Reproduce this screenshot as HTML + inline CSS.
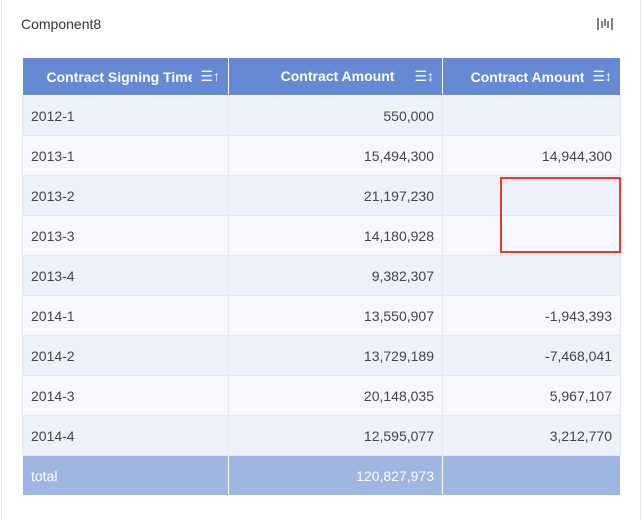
<!DOCTYPE html><html><head><style>
body{margin:0;width:644px;height:514px;background:#fff;font-family:"Liberation Sans",sans-serif;position:relative;overflow:hidden}
.card{position:absolute;left:1px;top:0;width:638px;height:520px;border-left:1px solid #e6e8ee;border-right:1px solid #e6e8ee}
.title{position:absolute;left:21px;top:16px;font-size:14px;color:#333}
table{position:absolute;left:22px;top:57px;border-collapse:collapse;font-size:14px;color:#444}
td,th{border:1px solid #e4e8f0;padding:0 8px;height:40px;box-sizing:border-box}
th{background:#6589d3;color:#fff;font-weight:bold;height:38px;border-color:#fff;text-align:right;white-space:nowrap;overflow:hidden}
tr.a td{background:#edf2fa}tr.b td{background:#f6f8fc}
tr.t td{background:#9fb5e2;color:#fff;border-color:#fff}
.r{text-align:right}
.ic{display:inline-block;margin-left:8px;font-weight:normal}
</style></head><body>
<div class="card"></div>
<div class="title">Component8</div>
<svg style="position:absolute;left:597px;top:16px" width="16" height="16"><g stroke="#555" stroke-width="1.5"><line x1="1" y1="2" x2="1" y2="14"/><line x1="15" y1="2" x2="15" y2="14"/><line x1="5" y1="5" x2="5" y2="12"/><line x1="11" y1="5" x2="11" y2="12"/><line x1="8" y1="3" x2="8" y2="10"/></g></svg>
<table>
<colgroup><col style="width:206px"><col style="width:214px"><col style="width:178px"></colgroup>
<tr><th><span style="display:inline-block;max-width:146px;overflow:hidden;vertical-align:middle">Contract Signing Time</span><span class="ic">☰↑</span></th><th>Contract Amount<span class="ic" style="margin-left:20px">☰↕</span></th><th><span style="display:inline-block;max-width:114px;overflow:hidden;vertical-align:middle">Contract Amount</span><span class="ic">☰↕</span></th></tr>
<tr class="a"><td>2012-1</td><td class="r">550,000</td><td></td></tr>
<tr class="b"><td>2013-1</td><td class="r">15,494,300</td><td class="r">14,944,300</td></tr>
<tr class="a"><td>2013-2</td><td class="r">21,197,230</td><td></td></tr>
<tr class="b"><td>2013-3</td><td class="r">14,180,928</td><td></td></tr>
<tr class="a"><td>2013-4</td><td class="r">9,382,307</td><td></td></tr>
<tr class="b"><td>2014-1</td><td class="r">13,550,907</td><td class="r">-1,943,393</td></tr>
<tr class="a"><td>2014-2</td><td class="r">13,729,189</td><td class="r">-7,468,041</td></tr>
<tr class="b"><td>2014-3</td><td class="r">20,148,035</td><td class="r">5,967,107</td></tr>
<tr class="a"><td>2014-4</td><td class="r">12,595,077</td><td class="r">3,212,770</td></tr>
<tr class="t"><td>total</td><td class="r">120,827,973</td><td></td></tr>
</table>
<div style="position:absolute;left:500px;top:177px;width:117px;height:72px;border:2px solid #e8392f"></div>
</body></html>
